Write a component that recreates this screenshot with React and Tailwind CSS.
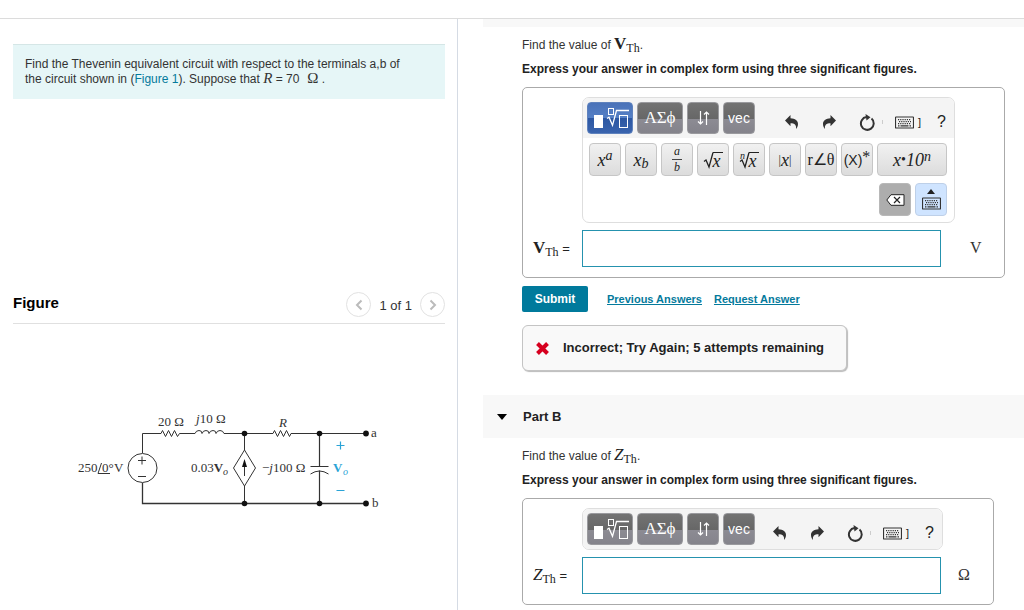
import React, { useState } from 'react'

const SERIF = "font-['Liberation_Serif',serif]"

function Keyboard() {
  return (
    <svg width="19" height="13" viewBox="0 0 19 13" fill="none" stroke="#333">
      <rect x="0.5" y="1" width="18" height="11" rx="0.5" strokeWidth="1.2" />
      <path d="M3 3.7h13M4 5.7h12M3 7.7h13" strokeDasharray="1.2 1" strokeWidth="1.2" />
      <path d="M3 9.8h1.5M5.5 9.8h8M14.5 9.8H16" strokeWidth="1.2" />
    </svg>
  )
}

function UndoIcon() {
  return (
    <svg width="13" height="14" viewBox="0 0 13 14" fill="#333">
      <path d="M0 5.5 5.5 0v3.2C10.1 3.4 13 5.5 13 9.1c0 1.9-.8 3.7-2 4.9.6-4-1.4-5.7-5.5-5.7v3z" />
    </svg>
  )
}

function RedoIcon() {
  return (
    <svg width="13" height="14" viewBox="0 0 13 14" fill="#333">
      <path d="M13 5.5 7.5 0v3.2C2.9 3.4 0 5.5 0 9.1 0 11 .8 12.8 2 14c-.6-4 1.4-5.7 5.5-5.7v3z" />
    </svg>
  )
}

function ResetIcon() {
  return (
    <svg width="16" height="17" viewBox="0 0 16 17">
      <path d="M12.5 4.6A6.4 6.4 0 1 1 7.5 3.1" fill="none" stroke="#333" strokeWidth="2" />
      <path d="M6.5 0 11.5 3.3 7.5 6.4z" fill="#333" />
    </svg>
  )
}

function TemplateIcon() {
  return (
    <svg width="37" height="22" viewBox="0 0 37 22" fill="none" stroke="#fff">
      <rect x="2" y="8" width="9" height="13" fill="#fff" stroke="none" />
      <rect x="16.5" y="1.5" width="5" height="6" />
      <path d="M15 11.5l2-1.2 3.5 8L24.5 3.5H37" strokeWidth="1.3" />
      <rect x="27.5" y="8.5" width="8" height="12" />
    </svg>
  )
}

function Th({ letter, bold }) {
  return (
    <span className={`${SERIF} text-[17px] leading-3 text-[#222]`}>
      {bold ? <b>{letter}</b> : <i>{letter}</i>}
      <span className="relative top-[3px] text-xs leading-3">Th</span>
    </span>
  )
}

function ToolButton({ label, active, wide, children }) {
  return (
    <button
      type="button"
      aria-label={label}
      className={`flex h-8 shrink-0 items-center justify-center rounded-[4px] border text-white ${wide ? 'w-[46px]' : 'w-8'} ${
        active
          ? 'border-[#5f82bd] bg-[linear-gradient(#4a72b8_0%,#5580c6_50%,#2b56a2_50%,#3a64ae_100%)]'
          : 'border-[#9a9a9e] bg-[linear-gradient(#737373_0%,#666_55%,#8c8b93_55%,#84838b_100%)]'
      }`}
    >
      {children}
    </button>
  )
}

function Key({ label, wide, children }) {
  return (
    <button
      type="button"
      aria-label={label}
      className={`flex h-[33px] items-center justify-center rounded-[4px] border border-[#c6c6c6] bg-linear-to-b from-[#f1f1f1] to-[#dcdcdc] text-[#222] ${wide ? 'w-[70px]' : 'w-8'} ${SERIF} text-lg leading-none`}
    >
      {children}
    </button>
  )
}

function Root({ index }) {
  return (
    <span className="flex items-end">
      <svg className="overflow-visible" width="9" height="17" viewBox="0 0 9 17" fill="none" stroke="#222">
        <path d="M0 10.5l2-1.5 3 7L9 1.5" strokeWidth="1.3" />
        {index && <text x="0" y="8" fontSize="10" fontStyle="italic" fill="#222" stroke="none">n</text>}
      </svg>
      <i className="h-4 border-t border-[#222] pr-0.5 leading-4">x</i>
    </span>
  )
}

function ToolbarHeader({ active }) {
  return (
    <div className="flex h-10 items-center gap-1 bg-[#f4f4f4] px-1">
      <ToolButton label="Templates" active={active} wide><TemplateIcon /></ToolButton>
      <ToolButton label="Symbols" wide><span className={`${SERIF} text-[17px]`}>ΑΣϕ</span></ToolButton>
      <ToolButton label="Arrows">
        <svg width="13" height="16" viewBox="0 0 13 16" fill="none" stroke="#fff" strokeWidth="1.2">
          <path d="M3.5 1v13M1 11.5l2.5 2.5L6 11.5M9.5 15V2M7 4.5 9.5 2 12 4.5" />
        </svg>
      </ToolButton>
      <ToolButton label="Vector"><span className="text-sm">vec</span></ToolButton>
      <div className="ml-auto flex items-center pt-2 pr-1">
        <button type="button" aria-label="Undo" className="mr-[25px]"><UndoIcon /></button>
        <button type="button" aria-label="Redo" className="mr-[23px]"><RedoIcon /></button>
        <button type="button" aria-label="Reset" className="mr-[7px]"><ResetIcon /></button>
        <span className="mr-3 h-1 w-px bg-[#ccc]" />
        <button type="button" aria-label="Keyboard shortcuts" className="mr-4 flex items-center gap-1 text-[11px] leading-none text-[#222]">
          <Keyboard />]
        </button>
        <button type="button" aria-label="Help" className="text-base leading-none text-[#222]">?</button>
      </div>
    </div>
  )
}

function Keypad() {
  return (
    <div className="pt-[5px] pr-[7px] pb-1.5 pl-1.5">
      <div className="flex gap-1">
        <Key label="Superscript"><i>x</i><i className="mb-2 text-sm leading-none">a</i></Key>
        <Key label="Subscript"><i>x</i><i className="mt-2 text-sm leading-none">b</i></Key>
        <Key label="Fraction">
          <span className="flex flex-col text-xs leading-[11px] italic">
            <span className="border-b border-[#444] px-0.5 pb-0.5">a</span>
            <span className="px-0.5 pt-0.5">b</span>
          </span>
        </Key>
        <Key label="Square root"><Root /></Key>
        <Key label="Nth root"><Root index /></Key>
        <Key label="Absolute value"><span className="text-xs">|</span><i>x</i><span className="text-xs">|</span></Key>
        <Key label="Phasor"><span className="text-base">r∠θ</span></Key>
        <Key label="Conjugate"><span className="font-['Liberation_Sans',sans-serif] text-sm">(X)</span><span className="mb-1.5 text-base">*</span></Key>
        <Key label="Scientific notation" wide><i>x</i><span className="text-sm">•</span><i>10</i><i className="mb-1.5 text-sm">n</i></Key>
      </div>
      <div className="mt-[7px] flex justify-end gap-1">
        <button type="button" aria-label="Delete" className="flex h-[33px] w-8 items-center justify-center rounded-[4px] border border-[#b8b8b8] bg-[#adadad]">
          <svg width="19" height="12" viewBox="0 0 19 12" stroke="#222">
            <path d="M.8 6 5 .7h13v10.6H5z" fill="#fff" />
            <path d="M8 3l6 6M14 3l-6 6" strokeWidth="1.2" />
          </svg>
        </button>
        <button type="button" aria-label="Hide keypad" className="flex h-[33px] w-8 flex-col items-center justify-center gap-[3px] rounded-[4px] border border-[#bed0e8] bg-[#cfe4ff]">
          <svg width="8" height="5" viewBox="0 0 8 5" fill="#222"><path d="M0 5 4 0l4 5z" /></svg>
          <Keyboard />
        </button>
      </div>
    </div>
  )
}

function AnswerBox({ id, label, unit, expanded }) {
  const [value, setValue] = useState('')

  return (
    <div className={`mt-2.5 max-w-full rounded-[5px] border border-[#aaa] ${expanded ? 'w-[483px]' : 'w-[472px]'}`}>
      <div className={`mt-[9px] ml-[59px] overflow-hidden rounded-[7px] border border-[#dedede] ${expanded ? 'mr-[49px]' : 'mr-[50px]'}`}>
        <ToolbarHeader active={expanded} />
        {expanded && <Keypad />}
      </div>
      <div className="mt-[7px] mb-2.5 flex items-center pl-2.5">
        <label htmlFor={id} className="w-[49px] shrink-0 whitespace-nowrap text-[13px] leading-none text-[#222]">
          {label} =
        </label>
        <input
          id={id}
          type="text"
          value={value}
          onChange={(e) => setValue(e.target.value)}
          className="h-[37px] min-w-0 flex-1 border border-[#2592ae] bg-white px-2 outline-none"
        />
        <span className={`${SERIF} shrink-0 pb-0.5 text-base leading-none text-[#333] ${expanded ? 'w-[63px] pl-[29px]' : 'w-[52px] pl-[17px]'}`}>{unit}</span>
      </div>
    </div>
  )
}

function Circuit() {
  return (
    <svg className="mt-[79px] ml-[59px]" width="320" height="112" viewBox="72 404 320 112" fontFamily="Liberation Serif, serif" fontSize="13" fill="#333">
      <g fill="none" stroke="#333">
        <path d="M142.5 454V434.5H161l1.5-3 3 6 3-6 3 6 3-6 3 6 2-3H195q1-3 4-3t3 3q1-3 4-3t3 3q1-3 4-3t3 3q1-3 4-3t4 3H273l1.5-3 3 6 3-6 3 6 3-6 3 6 1.5-3H366" />
        <path d="M142.5 484v20.5H366" strokeWidth="1.3" />
        <circle cx="142.5" cy="469" r="14.5" />
        <path d="M138 461.5h8M142 457.5v8M138 477.5h8" />
        <path d="M244.5 434v17M244.5 487v17M233.5 469l11-18 11 18-11 18z" />
        <path d="M244.5 477v-12" />
        <path d="M319.5 434v33.5M310.5 467.5h18M319.5 471.5V504" strokeWidth="1.2" />
        <path d="M310.5 475q9-6 18 0" />
        <path d="M98 474.5 101.5 464M98 474.5h12" />
      </g>
      <g fill="#111">
        <path d="M244.5 460l2.5 8h-5z" />
        <circle cx="244.5" cy="434.5" r="2.8" />
        <circle cx="244.5" cy="504.5" r="2.8" />
        <circle cx="319.5" cy="434.5" r="2.8" />
        <circle cx="319.5" cy="504.5" r="2.8" />
        <circle cx="366" cy="434.5" r="2.9" />
        <circle cx="366" cy="504.5" r="2.9" />
      </g>
      <text x="158" y="427">20 Ω</text>
      <text x="196" y="424"><tspan fontStyle="italic">j</tspan>10 Ω</text>
      <text x="279" y="428" fontStyle="italic">R</text>
      <text x="78" y="473">250</text>
      <text x="102" y="473">0°</text>
      <text x="114" y="473">V</text>
      <text x="191" y="473">0.03<tspan fontWeight="bold">V</tspan></text>
      <text x="223" y="476" fontSize="10" fontStyle="italic">o</text>
      <text x="262" y="473">−<tspan fontStyle="italic">j</tspan>100 Ω</text>
      <text x="371" y="438">a</text>
      <text x="372" y="508">b</text>
      <g fill="#2aa3d6">
        <text x="333" y="473" fontWeight="bold">V</text>
        <text x="343" y="476" fontSize="10" fontStyle="italic">o</text>
        <path d="M336.5 446.5h8M340.5 442.5v8M336.5 491.5h8" stroke="#2aa3d6" strokeWidth="1.2" />
      </g>
    </svg>
  )
}

function PageButton({ label, d }) {
  return (
    <button type="button" aria-label={label} className="flex size-[25px] items-center justify-center rounded-full border border-[#e2e2e2]">
      <svg width="8" height="12" viewBox="0 0 8 12" fill="none" stroke="#bbb" strokeWidth="2"><path d={d} /></svg>
    </button>
  )
}

export default function App() {
  return (
    <div className="flex min-h-screen flex-col bg-white font-['Liberation_Sans',Arial,sans-serif] text-[13px] text-[#333]">
      <header className="h-[19px] border-b border-[#dcdcdc]" />
      <div className="flex flex-1">
        <aside className="w-[458px] shrink-0 border-r border-[#d5dbe4] pt-[25px] pr-3 pl-[13px]">
          <p className="border-t border-[#d5e6e6] bg-[#e6f6f7] py-3 pr-8 pl-3 text-xs leading-[15px]">
            Find the Thevenin equivalent circuit with respect to the terminals a,b of the circuit shown in (
            <a href="#figure" className="text-[#047a9c]">Figure 1</a>). Suppose that{' '}
            <i className={`${SERIF} text-[15px] leading-3`}>R</i> = 70
            <span className={`${SERIF} ml-2 text-[15px] leading-3`}>Ω</span> .
          </p>

          <div className="mt-[193px] flex items-center border-b border-[#e0e0e0] pb-1.5">
            <h2 className="pb-1 text-[15px] leading-5 font-bold text-black">Figure</h2>
            <div className="ml-auto flex items-center gap-2">
              <PageButton label="Previous figure" d="M6.5 1.5 2 6l4.5 4.5" />
              <span className="pt-0.5">1 of 1</span>
              <PageButton label="Next figure" d="M1.5 1.5 6 6l-4.5 4.5" />
            </div>
          </div>
          <div id="figure"><Circuit /></div>
        </aside>

        <main className="min-w-0 flex-1 pl-[25px]">
          <div className="h-2 bg-[#f8f8f8]" />
          <section className="pt-2.5 pl-[39px]">
            <p className="h-4 text-xs leading-4">Find the value of <Th letter="V" bold />.</p>
            <p className="mt-2 text-xs leading-4 font-bold text-[#222]">Express your answer in complex form using three significant figures.</p>
            <AnswerBox id="vth" label={<Th letter="V" bold />} unit="V" expanded />

            <div className="mt-2 flex items-center">
              <button type="button" className="h-[26px] w-[66px] rounded-[2px] bg-[#007a9c] text-xs font-bold text-white">Submit</button>
              <a href="#previous" className="ml-[19px] text-[11px] font-bold text-[#047a9c] underline">Previous Answers</a>
              <a href="#request" className="ml-3 text-[11px] font-bold text-[#047a9c] underline">Request Answer</a>
            </div>

            <div className="mt-[13px] flex h-[46px] w-[325px] items-center rounded-md border border-[#c4c4c4] bg-[#f9f9f9] pl-[13px] font-bold text-[#222] shadow-[1px_1px_1px_#bbb]">
              <svg className="mr-3.5" width="13" height="13" viewBox="0 0 13 13" stroke="#d6001f" strokeWidth="4"><path d="M1.5 1.5l10 10M11.5 1.5l-10 10" /></svg>
              Incorrect; Try Again; 5 attempts remaining
            </div>
          </section>

          <h3 className="mt-6 flex h-[43px] items-center bg-[#f8f8f8] pl-3.5 font-bold text-[#222]">
            <svg className="mr-4" width="10" height="6" viewBox="0 0 10 6"><path d="M0 0h10L5 6z" /></svg>
            Part B
          </h3>
          <section className="pt-2.5 pb-1 pl-[39px]">
            <p className="h-4 text-xs leading-4">Find the value of <Th letter="Z" />.</p>
            <p className="mt-2 text-xs leading-4 font-bold text-[#222]">Express your answer in complex form using three significant figures.</p>
            <AnswerBox id="zth" label={<Th letter="Z" />} unit="Ω" />
          </section>
        </main>
      </div>
    </div>
  )
}
